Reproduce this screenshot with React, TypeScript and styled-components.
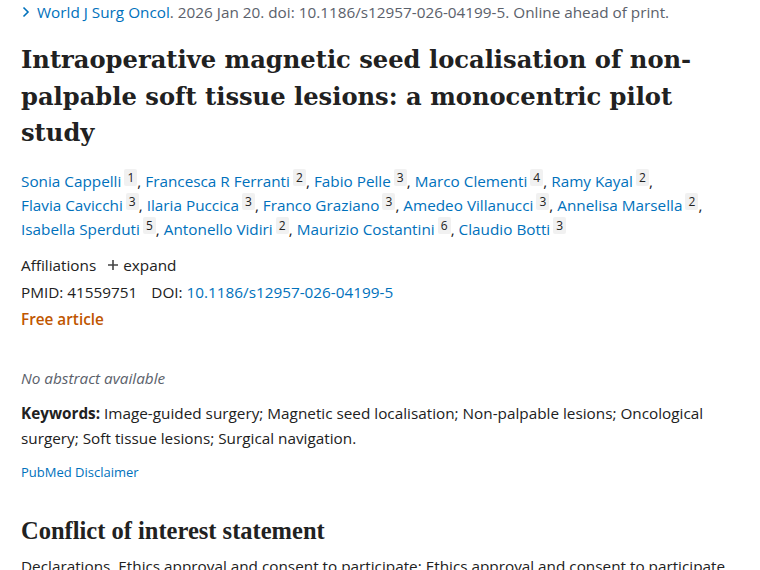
import styled, { createGlobalStyle } from 'styled-components';

const GlobalStyle = createGlobalStyle`
  body {
    margin: 0;
    background: #fff;
    font-family: "Open Sans", "Noto Sans", sans-serif;
    font-size: 15.3px;
    color: #212121;
  }
`;

const Page = styled.main`
  padding: 0 21px;
  width: 718px;
`;

const Citation = styled.div`
  display: flex;
  align-items: center;
  gap: 6px;
  line-height: 24px;
  color: #5b616b;
`;

const JournalLink = styled.a`
  color: #0071bc;
  text-decoration: none;
`;

const Title = styled.h1`
  margin: 18px 0 0;
  font-family: "DejaVu Serif", "Liberation Serif", serif;
  font-weight: 700;
  font-size: 24.2px;
  line-height: 36.5px;
  color: #212121;
`;

const Authors = styled.div`
  margin-top: 17px;
  line-height: 24px;
`;

const Author = styled.span`
  white-space: nowrap;
`;

const AuthorLink = styled.a`
  color: #0071bc;
  text-decoration: none;
`;

const AffNum = styled.sup`
  display: inline-block;
  vertical-align: top;
  margin-left: 3px;
  padding: 0 2.5px;
  min-width: 8px;
  line-height: 17px;
  font-size: 12px;
  text-align: center;
  background: #f1f1f1;
  color: #212121;
  border-radius: 2px;
`;

const MetaRow = styled.div<{ $top?: number }>`
  margin-top: ${(p) => p.$top ?? 0}px;
  line-height: 27px;
  display: flex;
  align-items: center;
  gap: 14px;
`;

const Toggle = styled.span`
  display: inline-flex;
  align-items: center;
  gap: 4px;
  margin-left: -3px;
`;

const Free = styled.div`
  line-height: 27px;
  font-weight: 600;
  color: #c05600;
`;

const NoAbstract = styled.p`
  margin: 33px 0 0;
  line-height: 24px;
  font-style: italic;
  color: #5b616b;
`;

const Keywords = styled.p`
  margin: 11px 0 0;
  line-height: 25px;
  strong {
    font-weight: 700;
  }
`;

const Disclaimer = styled.a`
  display: block;
  margin-top: 11px;
  font-size: 13px;
  line-height: 20px;
  color: #0071bc;
  text-decoration: none;
`;

const SectionTitle = styled.h2`
  margin: 34px 0 0;
  font-family: "Liberation Serif", "DejaVu Serif", serif;
  font-weight: 700;
  font-size: 24.5px;
  line-height: 30px;
`;

const Body = styled.p`
  margin: 8px 0 0;
  line-height: 24px;
`;

const authors: [string, number][] = [
  ['Sonia Cappelli', 1],
  ['Francesca R Ferranti', 2],
  ['Fabio Pelle', 3],
  ['Marco Clementi', 4],
  ['Ramy Kayal', 2],
  ['Flavia Cavicchi', 3],
  ['Ilaria Puccica', 3],
  ['Franco Graziano', 3],
  ['Amedeo Villanucci', 3],
  ['Annelisa Marsella', 2],
  ['Isabella Sperduti', 5],
  ['Antonello Vidiri', 2],
  ['Maurizio Costantini', 6],
  ['Claudio Botti', 3],
];

export default function App() {
  return (
    <>
      <GlobalStyle />
      <Page>
        <Citation>
          <svg width="10" height="12" viewBox="0 0 10 12">
            <path d="M2.5 1.5 L7 6 L2.5 10.5" fill="none" stroke="#0071bc" strokeWidth="1.6" />
          </svg>
          <span>
            <JournalLink href="#">World J Surg Oncol</JournalLink>. 2026 Jan 20. doi:
            10.1186/s12957-026-04199-5. Online ahead of print.
          </span>
        </Citation>
        <Title>
          Intraoperative magnetic seed localisation of non-palpable soft tissue lesions: a
          monocentric pilot study
        </Title>
        <Authors>
          {authors.map(([name, n], i) => (
            <span key={name}>
              <Author>
                <AuthorLink href="#">{name}</AuthorLink>
                <AffNum>{n}</AffNum>
                {i < authors.length - 1 ? ',' : ''}
              </Author>{' '}
            </span>
          ))}
        </Authors>
        <MetaRow $top={11}>
          <span>Affiliations</span>
          <Toggle>
            <svg width="12" height="12" viewBox="0 0 12 12">
              <path d="M6 1 V11 M1 6 H11" stroke="#444" strokeWidth="1.6" />
            </svg>
            expand
          </Toggle>
        </MetaRow>
        <MetaRow>
          <span>PMID: 41559751</span>
          <span>
            DOI: <JournalLink href="#">10.1186/s12957-026-04199-5</JournalLink>
          </span>
        </MetaRow>
        <Free>Free article</Free>
        <NoAbstract>No abstract available</NoAbstract>
        <Keywords>
          <strong>Keywords:</strong> Image-guided surgery; Magnetic seed localisation;
          Non-palpable lesions; Oncological surgery; Soft tissue lesions; Surgical navigation.
        </Keywords>
        <Disclaimer href="#">PubMed Disclaimer</Disclaimer>
        <SectionTitle>Conflict of interest statement</SectionTitle>
        <Body>
          Declarations. Ethics approval and consent to participate: Ethics approval and consent
          to participate
        </Body>
      </Page>
    </>
  );
}
